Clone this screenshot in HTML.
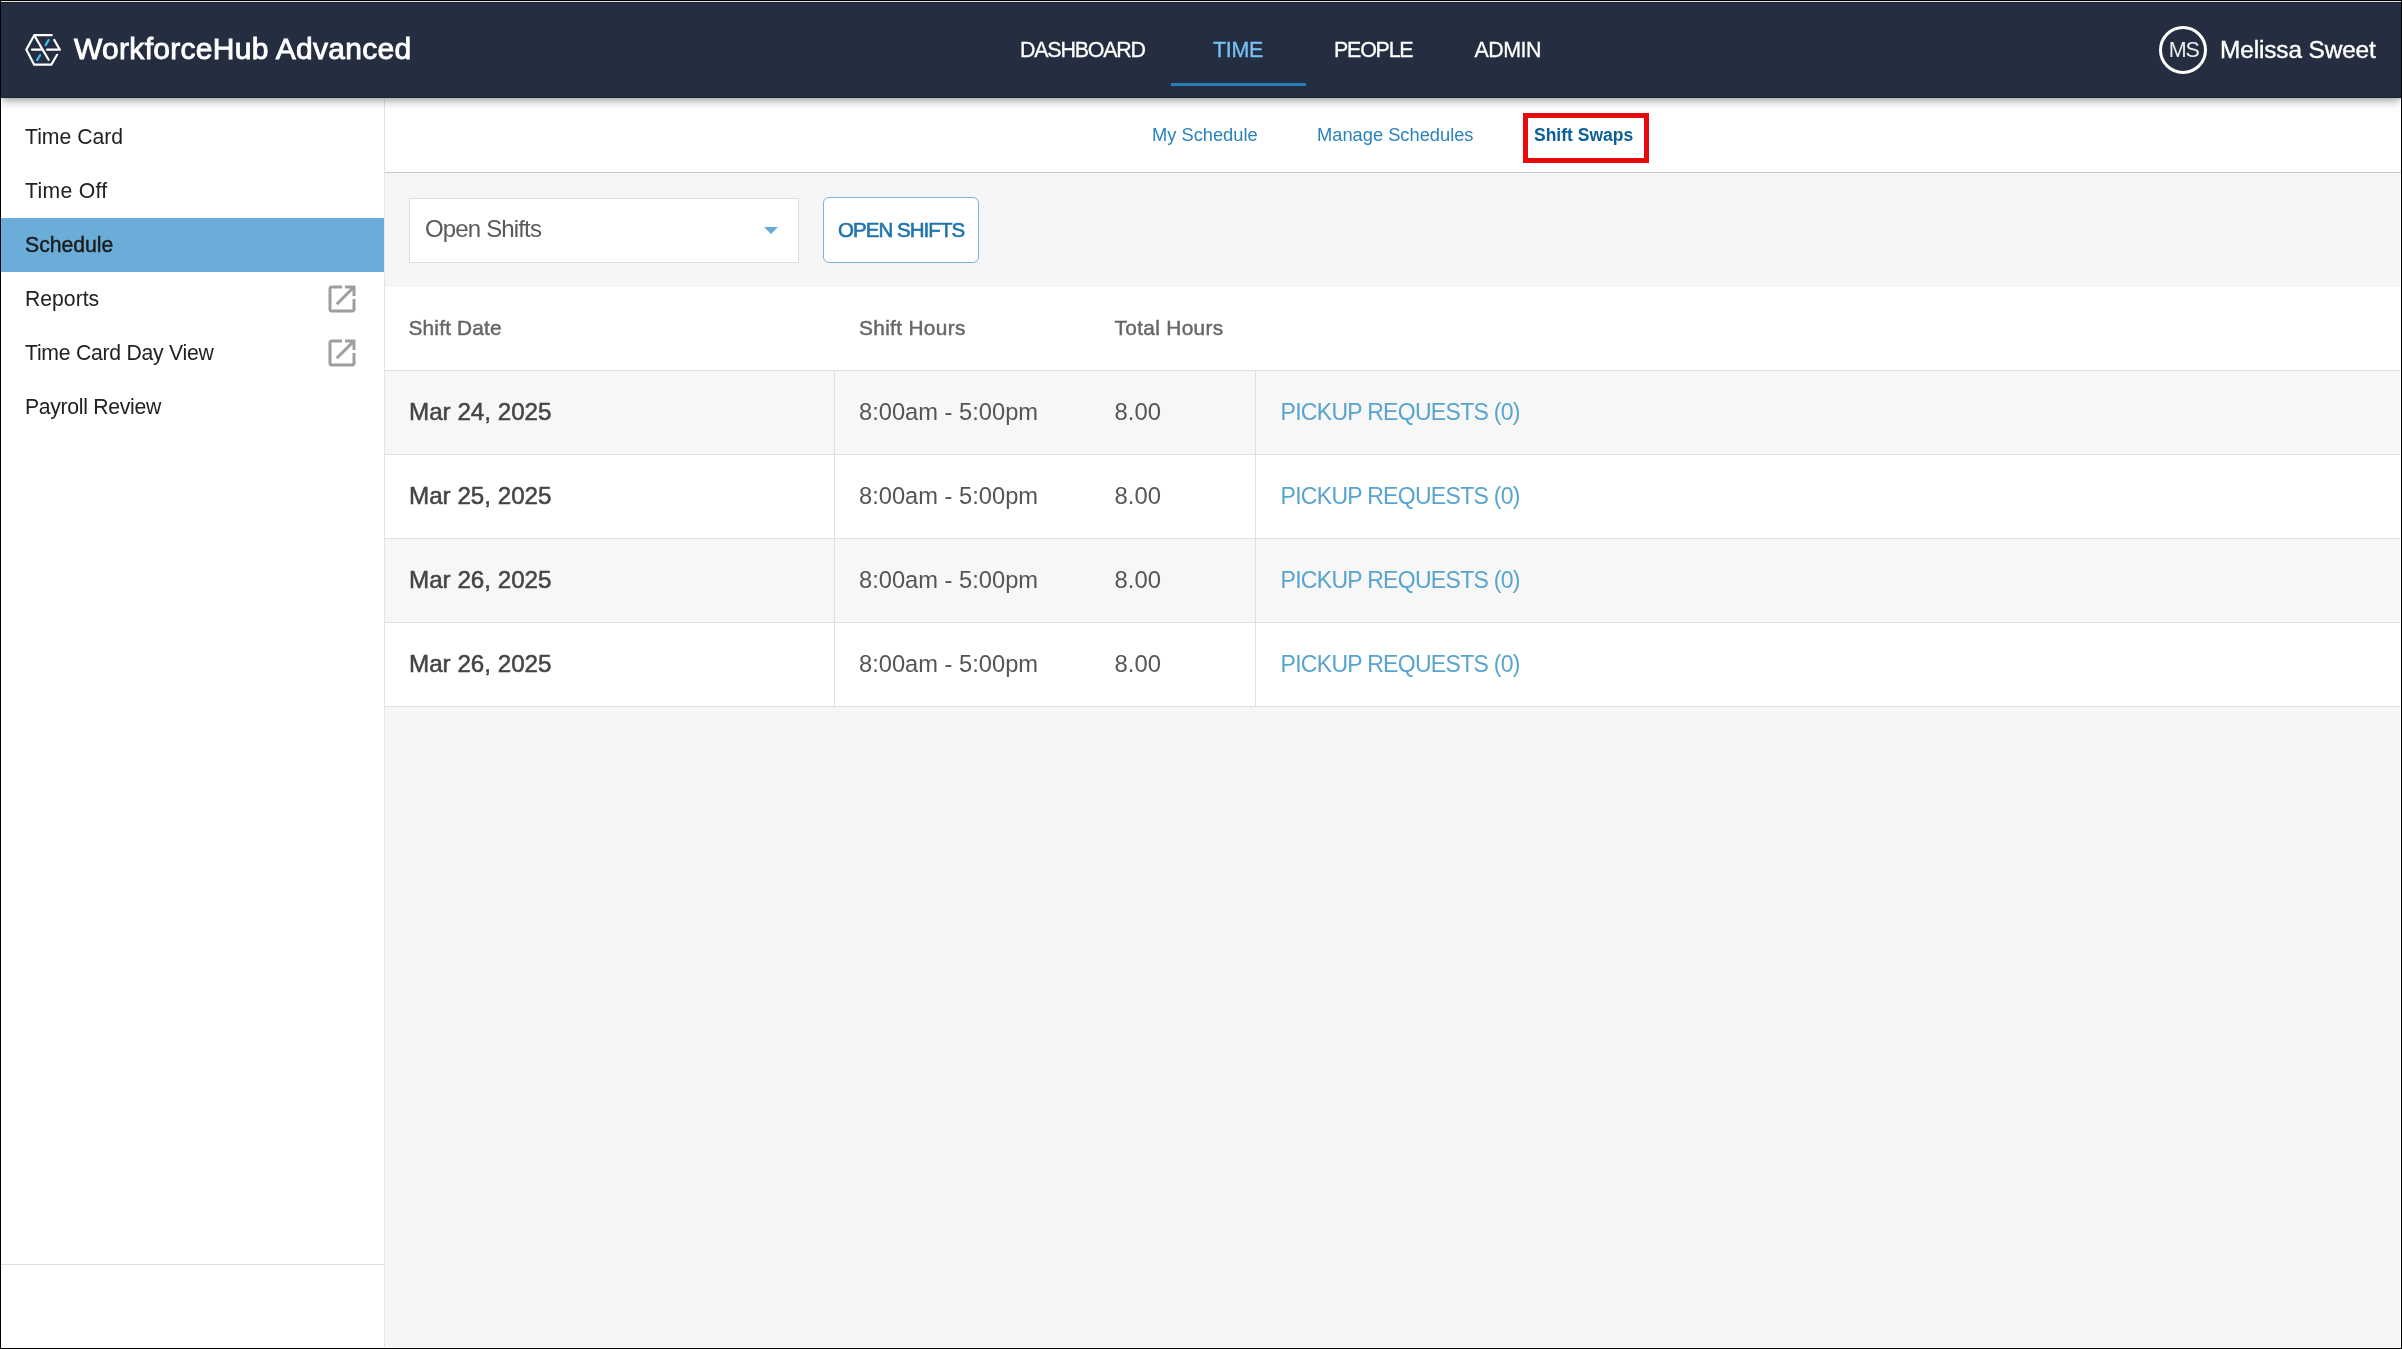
<!DOCTYPE html>
<html>
<head>
<meta charset="utf-8">
<style>
html,body{margin:0;padding:0;}
body{width:2402px;height:1349px;background:#000;position:relative;overflow:hidden;font-family:"Liberation Sans",sans-serif;}
#page{position:absolute;left:1px;top:1px;width:2400px;height:1347px;background:#fff;overflow:hidden;will-change:transform;}
.a{position:absolute;white-space:nowrap;line-height:1;}
/* header */
#hdr{position:absolute;left:0;top:0;width:2400px;height:97px;background:#252e40;z-index:5;
  box-shadow:0 3px 4px -1.5px rgba(0,0,0,.12),0 6px 8px -1px rgba(0,0,0,.17),0 1px 12px 0 rgba(0,0,0,.1);}
#hdr .topline{position:absolute;left:0;top:0;width:2400px;height:1px;background:#e0e2e0;}
#hdr .l2{position:absolute;left:0;top:1px;width:2400px;height:1px;background:#1b2232;}
#hdr .bl{position:absolute;left:0;top:96px;width:2400px;height:1px;background:#1b2333;}
/* sidebar */
#side{position:absolute;left:0;top:97px;width:383px;height:1250px;background:#fff;border-right:1px solid #e3e3e3;}
/* main */
#main{position:absolute;left:384px;top:97px;width:2015px;height:1249px;background:#f6f6f6;}
#subnav{position:absolute;left:0;top:0;width:2016px;height:74px;background:#fff;border-bottom:1px solid #c8c8c8;}
#title{left:73px;top:33px;font-size:30px;letter-spacing:0.3px;font-weight:400;color:#fff;-webkit-text-stroke:0.9px #fff;}
.nav{font-size:21.4px;color:#fff;top:38.5px;letter-spacing:-1.2px;-webkit-text-stroke:0.3px #fff;}
#n1{left:1019px;} #n2{left:1212px;} #n3{left:1333px;} #n4{left:1473.5px;}
#uline{position:absolute;left:1170px;top:82px;width:135px;height:3px;background:#2680b6;}
#avatar{position:absolute;left:2157.8px;top:24.8px;width:42px;height:42px;border:3px solid #fff;border-radius:50%;}
#avatar span{position:absolute;left:1px;top:0.5px;width:42px;text-align:center;line-height:42px;font-size:21.5px;letter-spacing:-1px;color:#eee;}
#uname{left:2219px;top:37px;font-size:24.4px;letter-spacing:-0.12px;color:#fff;-webkit-text-stroke:0.4px #fff;}
.si{position:absolute;left:0;width:383px;height:54px;}
.si{font-size:21.2px;color:#212121;line-height:54px;text-indent:24px;white-space:nowrap;}
.si.act{background:#6aadd9;color:#1c1c1c;-webkit-text-stroke:0.45px #1c1c1c;}
.ext{position:absolute;left:323px;top:9px;}
#sline{position:absolute;left:0;top:1166px;width:383px;height:1px;background:#e0e0e0;}
.st{font-size:18.3px;color:#2a82bb;top:28px;}
#st1{left:767px;} #st2{left:932px;} #st3{left:1149px;top:29px;font-weight:700;font-size:17.5px;color:#0d5f9a;}
#redbox{position:absolute;left:1138px;top:15px;width:116px;height:40px;border:5px solid #e60a0a;}
#sel{position:absolute;left:24px;top:100px;width:388px;height:63px;background:#fff;border:1px solid #dfdfdf;}
#seltxt{left:15px;top:18px;font-size:24px;letter-spacing:-0.85px;color:#5a5a5a;}
#tri{position:absolute;left:353.5px;top:28px;width:0;height:0;border-left:7.5px solid transparent;border-right:7.5px solid transparent;border-top:7.5px solid #66acd8;}
#btn{position:absolute;left:438px;top:99px;width:154px;height:64px;background:#fff;border:1.5px solid #7fb3d5;border-radius:6px;}
#btntxt{left:14px;top:22px;font-size:20.5px;letter-spacing:-0.95px;font-weight:400;color:#1f74ad;-webkit-text-stroke:0.6px #1f74ad;}
#table{position:absolute;left:0;top:189px;width:2015px;}
#thead{position:absolute;left:0;top:0;width:2015px;height:83px;background:#fff;border-bottom:1px solid #dedede;}
.th{font-size:20.8px;letter-spacing:0.2px;color:#666;top:31px;-webkit-text-stroke:0.45px #666;}
.row{position:absolute;left:0;width:2015px;height:83px;background:#fff;border-bottom:1px solid #e0e0e0;}
.row.odd{background:#f7f7f7;}
.vd{position:absolute;top:0;width:1px;height:83px;background:#e0e0e0;}
.td{top:29px;}
.dt{left:24px;font-size:24.2px;color:#444;-webkit-text-stroke:0.5px #444;}
.hr{left:474px;font-size:23.7px;color:#555;top:30px;}
.tot{left:729.5px;font-size:23.85px;color:#555;}
.pk{left:895.5px;font-size:23px;letter-spacing:-0.7px;color:#57a4cf;top:30px;}
</style>
</head>
<body>
<div id="page">
  <div id="hdr">
    <div class="topline"></div><div class="l2"></div><div class="bl"></div>
    <svg style="position:absolute;left:-1px;top:-1px" width="100" height="100" viewBox="0 0 100 100">
      <g fill="none" stroke="#fff" stroke-width="2.2" stroke-linecap="round" stroke-linejoin="round">
        <polyline points="51.7,35.2 34.2,35.2 26.3,49.6 34.2,64.7 51.3,64.7 57.1,54.8"/>
        <polyline points="54.2,39.9 59.9,49.7 47,49.7"/>
        <line x1="32" y1="49.7" x2="41.3" y2="49.7"/>
        <line x1="34.4" y1="35.6" x2="48.6" y2="59.8"/>
      </g>
      <g stroke="#3cc0f2" stroke-width="2.2" stroke-linecap="round">
        <line x1="48.6" y1="40" x2="45.6" y2="45.1"/>
        <line x1="40.1" y1="55.1" x2="37.1" y2="60.1"/>
      </g>
    </svg>
    <div class="a" id="title">WorkforceHub Advanced</div>
    <div class="a nav" id="n1">DASHBOARD</div>
    <div class="a nav" id="n2" style="color:#79c0f5;-webkit-text-stroke:0.3px #79c0f5;letter-spacing:-0.25px">TIME</div>
    <div class="a nav" id="n3">PEOPLE</div>
    <div class="a nav" id="n4" style="letter-spacing:-0.5px">ADMIN</div>
    <div id="uline"></div>
    <div id="avatar"><span>MS</span></div>
    <div class="a" id="uname">Melissa Sweet</div>
  </div>
  <div id="side">
    <div class="si" style="top:12px">Time Card</div>
    <div class="si" style="top:66px;letter-spacing:0.3px">Time Off</div>
    <div class="si act" style="top:120px">Schedule</div>
    <div class="si" style="top:174px">Reports<svg class="ext" width="36" height="36" viewBox="0 0 24 24"><path fill="#9e9e9e" d="M19 19H5V5h7V3H5c-1.11 0-2 .9-2 2v14c0 1.1.89 2 2 2h14c1.1 0 2-.9 2-2v-7h-2v7zM14 3v2h3.59l-9.83 9.83 1.41 1.41L19 6.41V10h2V3h-7z"/></svg></div>
    <div class="si" style="top:228px;letter-spacing:-0.25px">Time Card Day View<svg class="ext" width="36" height="36" viewBox="0 0 24 24"><path fill="#9e9e9e" d="M19 19H5V5h7V3H5c-1.11 0-2 .9-2 2v14c0 1.1.89 2 2 2h14c1.1 0 2-.9 2-2v-7h-2v7zM14 3v2h3.59l-9.83 9.83 1.41 1.41L19 6.41V10h2V3h-7z"/></svg></div>
    <div class="si" style="top:282px;letter-spacing:-0.3px">Payroll Review</div>
    <div id="sline"></div>
  </div>
  <div id="main">
    <div id="subnav">
      <div class="a st" id="st1">My Schedule</div>
      <div class="a st" id="st2">Manage Schedules</div>
      <div class="a st" id="st3">Shift Swaps</div>
      <div id="redbox"></div>
    </div>
    <div id="sel"><div class="a" id="seltxt">Open Shifts</div><div id="tri"></div></div>
    <div id="btn"><div class="a" id="btntxt">OPEN SHIFTS</div></div>
    <div id="table">
      <div id="thead">
        <div class="a th" style="left:23.5px">Shift Date</div>
        <div class="a th" style="left:474px;letter-spacing:0.35px">Shift Hours</div>
        <div class="a th" style="left:729.5px;letter-spacing:0.35px">Total Hours</div>
      </div>
      <div class="row odd" style="top:84px">
        <div class="a td dt">Mar 24, 2025</div><div class="a td hr">8:00am - 5:00pm</div><div class="a td tot">8.00</div><div class="a td pk">PICKUP REQUESTS (0)</div>
        <div class="vd" style="left:449px"></div><div class="vd" style="left:870px"></div>
      </div>
      <div class="row" style="top:168px">
        <div class="a td dt">Mar 25, 2025</div><div class="a td hr">8:00am - 5:00pm</div><div class="a td tot">8.00</div><div class="a td pk">PICKUP REQUESTS (0)</div>
        <div class="vd" style="left:449px"></div><div class="vd" style="left:870px"></div>
      </div>
      <div class="row odd" style="top:252px">
        <div class="a td dt">Mar 26, 2025</div><div class="a td hr">8:00am - 5:00pm</div><div class="a td tot">8.00</div><div class="a td pk">PICKUP REQUESTS (0)</div>
        <div class="vd" style="left:449px"></div><div class="vd" style="left:870px"></div>
      </div>
      <div class="row" style="top:336px">
        <div class="a td dt">Mar 26, 2025</div><div class="a td hr">8:00am - 5:00pm</div><div class="a td tot">8.00</div><div class="a td pk">PICKUP REQUESTS (0)</div>
        <div class="vd" style="left:449px"></div><div class="vd" style="left:870px"></div>
      </div>
      
    </div>
  </div>
</div>
</body>
</html>
